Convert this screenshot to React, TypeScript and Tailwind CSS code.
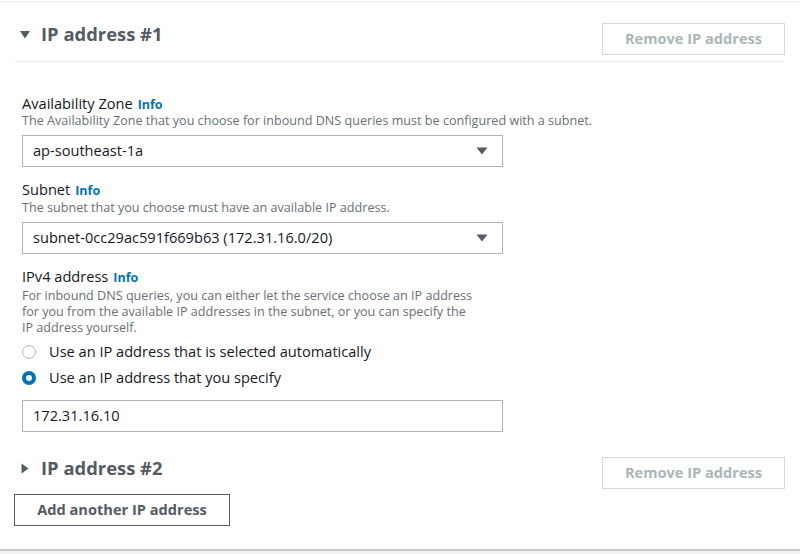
import React from "react";

function Info() {
  return <span className="ml-[5px] text-[12.5px] font-bold text-[#0073bb]">Info</span>;
}

function Label({ text }: { text: string }) {
  return (
    <div className="h-[20px] text-[14.6px] leading-[20px] text-[#16191f]">
      {text}
      <Info />
    </div>
  );
}

function Caret() {
  return (
    <svg width="12" height="8" viewBox="0 0 12 8" className="shrink-0">
      <path d="M0.5 0.5 H11.5 L6 7.5 Z" fill="#545b64" />
    </svg>
  );
}

function Select({ value }: { value: string }) {
  return (
    <div className="flex h-[32px] w-[481px] items-center justify-between border border-[#aab7b8] bg-white pl-[10px] pr-[14px] text-[14.6px] text-[#16191f]">
      <span>{value}</span>
      <Caret />
    </div>
  );
}

function Radio({ checked, label }: { checked?: boolean; label: string }) {
  return (
    <div className="flex h-[24px] items-center">
      {checked ? (
        <span className="h-[14px] w-[14px] rounded-full border-[4px] border-[#0073bb] bg-white" />
      ) : (
        <span className="h-[14px] w-[14px] rounded-full border border-[#aab7b8] bg-white" />
      )}
      <span className="ml-[13px] text-[14.6px] text-[#16191f]">{label}</span>
    </div>
  );
}

function RemoveButton() {
  return (
    <button className="h-[32px] w-[183px] border border-[#d5dbdb] bg-white text-[14.6px] font-bold text-[#aab7b8]">
      Remove IP address
    </button>
  );
}

export default function App() {
  return (
    <div
      className="flex h-[554px] w-[800px] flex-col overflow-hidden bg-white"
      style={{ fontFamily: '"Open Sans", "Noto Sans", sans-serif' }}
    >
      <div className="mt-[1px] h-[2px] bg-[#f2f3f3]" />

      {/* IP address #1 */}
      <div className="mt-[19px] flex items-start justify-between pl-[20px] pr-[15px]">
        <div className="flex h-[24px] items-center">
          <svg width="10" height="9" viewBox="0 0 10 9">
            <path d="M0 1 H10 L5 8.5 Z" fill="#545b64" />
          </svg>
          <span className="ml-[11px] text-[18.4px] font-bold leading-[24px] text-[#545b64]">IP address #1</span>
        </div>
        <div className="mt-[1px]">
          <RemoveButton />
        </div>
      </div>
      <div className="ml-[15px] mr-[17px] mt-[6px] h-[1px] bg-[#eaeded]" />

      <div className="pl-[22px]">
        <div className="mt-[31px]">
          <Label text="Availability Zone" />
        </div>
        <div className="text-[12.6px] leading-[16px] text-[#687078]">
          The Availability Zone that you choose for inbound DNS queries must be configured with a subnet.
        </div>
        <div className="mt-[6px]">
          <Select value="ap-southeast-1a" />
        </div>

        <div className="mt-[12px]">
          <Label text="Subnet" />
        </div>
        <div className="mt-[1px] text-[12.6px] leading-[16px] text-[#687078]">
          The subnet that you choose must have an available IP address.
        </div>
        <div className="mt-[6px]">
          <Select value="subnet-0cc29ac591f669b63 (172.31.16.0/20)" />
        </div>

        <div className="mt-[12px]">
          <Label text="IPv4 address" />
        </div>
        <div className="mt-[2px] w-[454px] text-[12.6px] leading-[16px] text-[#687078]">
          For inbound DNS queries, you can either let the service choose an IP address for you from the available IP
          addresses in the subnet, or you can specify the IP address yourself.
        </div>
        <div className="mt-[4px]">
          <Radio label="Use an IP address that is selected automatically" />
        </div>
        <div className="mt-[2px]">
          <Radio checked label="Use an IP address that you specify" />
        </div>
        <div className="mt-[10px] flex h-[32px] w-[481px] items-center border border-[#aab7b8] pl-[10px] text-[14.6px] text-[#16191f]">
          172.31.16.10
        </div>
      </div>

      {/* IP address #2 */}
      <div className="mt-[25px] flex items-start justify-between pl-[21px] pr-[15px]">
        <div className="-mt-[1px] flex h-[24px] items-center">
          <svg width="8" height="11" viewBox="0 0 8 11">
            <path d="M0.5 0.5 L7.5 5.5 L0.5 10.5 Z" fill="#545b64" />
          </svg>
          <span className="ml-[12px] text-[18.4px] font-bold leading-[24px] text-[#545b64]">IP address #2</span>
        </div>
        <RemoveButton />
      </div>

      <div className="mt-[5px] pl-[14px]">
        <button className="h-[32px] w-[216px] border border-[#545b64] bg-white text-[14.6px] font-bold text-[#545b64]">
          Add another IP address
        </button>
      </div>

      <div className="mt-[23px] h-[2px] bg-[#c6cccc]" />
      <div className="flex-1 bg-[#f2f3f3]" />
    </div>
  );
}
